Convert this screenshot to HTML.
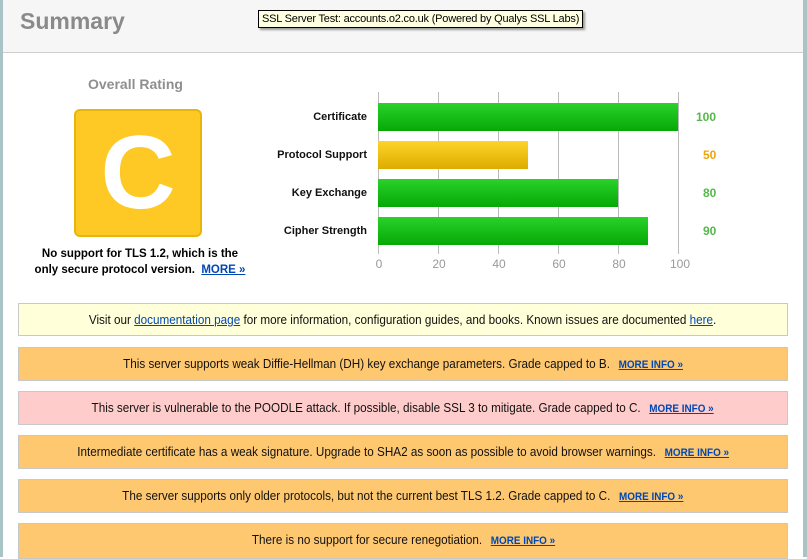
<!DOCTYPE html>
<html><head><meta charset="utf-8"><style>
body{margin:0;width:807px;height:557px;overflow:hidden;background:#fff;font-family:"Liberation Sans",Arial,sans-serif;position:relative}
.lb{position:absolute;left:0;top:0;width:3px;height:557px;background:#a9c3c6}
.rb{position:absolute;right:0;top:0;width:4px;height:557px;background:#a9c3c6}
.hdr{position:absolute;left:3px;top:0;width:800px;height:52px;background:#f6f6f6;border-bottom:1px solid #cfcfcf}
.hdr h1{position:absolute;left:17px;top:8px;margin:0;font-size:23px;color:#8a8a8a;font-weight:bold}
.tip{position:absolute;left:258px;top:10px;background:#ffffe1;border:1px solid #000;font-size:11px;padding:2px 3px;box-shadow:2px 2px 2px #999;white-space:nowrap;letter-spacing:-0.2px}
.or{position:absolute;left:88px;top:76px;font-size:14px;font-weight:bold;color:#8f8f8f}
.grade{position:absolute;left:74px;top:109px;width:124px;height:124px;background:#fec925;border:2px solid #e8b60a;border-radius:6px;color:#fff;font-size:104px;font-weight:bold;text-align:center;line-height:124px}
.note{position:absolute;left:20px;top:246px;width:240px;text-align:center;font-size:11.5px;font-weight:bold;line-height:16px;white-space:nowrap}
a{color:#0047b3;text-decoration:underline}
.lbl{position:absolute;right:440px;font-size:11px;font-weight:bold;color:#111;text-align:right}
.grid{position:absolute;top:92px;width:1px;height:162px;background:#bbb}
.bar{position:absolute;left:378px;height:28px;background:linear-gradient(#2ad22a,#06a806)}
.bar.y{background:linear-gradient(#fdd428,#deac00)}
.ax{position:absolute;top:257px;font-size:12px;color:#999;width:30px;text-align:center}
.val{position:absolute;left:696px;font-size:12px;font-weight:bold;color:#54b948}
.box{position:absolute;left:18px;width:768px;border:1px solid #c8c8c8;background:#fec871;text-align:center;font-family:"Liberation Sans Narrow","Liberation Sans",sans-serif;font-size:13px;color:#111;white-space:nowrap}
.box span{display:inline-block;transform:scaleX(0.9)}
.box a{font-weight:bold;font-size:11px;margin-left:6px}
</style></head><body>
<div class="lb"></div><div class="rb"></div>
<div class="hdr"><h1>Summary</h1></div>
<div class="tip">SSL Server Test: accounts.o2.co.uk (Powered by Qualys SSL Labs)</div>
<div class="or">Overall Rating</div>
<div class="grade">C</div>
<div class="note">No support for TLS 1.2, which is the<br>only secure protocol version. &nbsp;<a href="#">MORE »</a></div>

<div class="grid" style="left:378px"></div>
<div class="grid" style="left:438px"></div>
<div class="grid" style="left:498px"></div>
<div class="grid" style="left:558px"></div>
<div class="grid" style="left:618px"></div>
<div class="grid" style="left:678px"></div>
<div class="lbl" style="top:111px">Certificate</div>
<div class="lbl" style="top:149px">Protocol Support</div>
<div class="lbl" style="top:187px">Key Exchange</div>
<div class="lbl" style="top:225px">Cipher Strength</div>
<div class="bar" style="top:103px;width:300px"></div>
<div class="bar y" style="top:141px;width:150px"></div>
<div class="bar" style="top:179px;width:240px"></div>
<div class="bar" style="top:217px;width:270px"></div>
<div class="ax" style="left:364px">0</div>
<div class="ax" style="left:424px">20</div>
<div class="ax" style="left:484px">40</div>
<div class="ax" style="left:544px">60</div>
<div class="ax" style="left:604px">80</div>
<div class="ax" style="left:665px">100</div>
<div class="val" style="top:110px">100</div>
<div class="val" style="top:148px;left:703px;color:#f0a30a">50</div>
<div class="val" style="top:186px;left:703px">80</div>
<div class="val" style="top:224px;left:703px">90</div>

<div class="box" style="top:303px;height:31px;line-height:31px;background:#ffffd9"><span>Visit our <a href="#" style="font-weight:normal;font-size:13px;margin:0">documentation page</a> for more information, configuration guides, and books. Known issues are documented <a href="#" style="font-weight:normal;font-size:13px;margin:0">here</a>.</span></div>
<div class="box" style="top:347px;height:32px;line-height:32px"><span>This server supports weak Diffie-Hellman (DH) key exchange parameters. Grade capped to B. <a href="#">MORE INFO »</a></span></div>
<div class="box" style="top:391px;height:32px;line-height:32px;background:#ffcccc"><span>This server is vulnerable to the POODLE attack. If possible, disable SSL 3 to mitigate. Grade capped to C. <a href="#">MORE INFO »</a></span></div>
<div class="box" style="top:435px;height:32px;line-height:32px"><span>Intermediate certificate has a weak signature. Upgrade to SHA2 as soon as possible to avoid browser warnings. <a href="#">MORE INFO »</a></span></div>
<div class="box" style="top:479px;height:32px;line-height:32px"><span>The server supports only older protocols, but not the current best TLS 1.2. Grade capped to C. <a href="#">MORE INFO »</a></span></div>
<div class="box" style="top:523px;height:34px;line-height:32px"><span>There is no support for secure renegotiation. <a href="#">MORE INFO »</a></span></div>
</body></html>
